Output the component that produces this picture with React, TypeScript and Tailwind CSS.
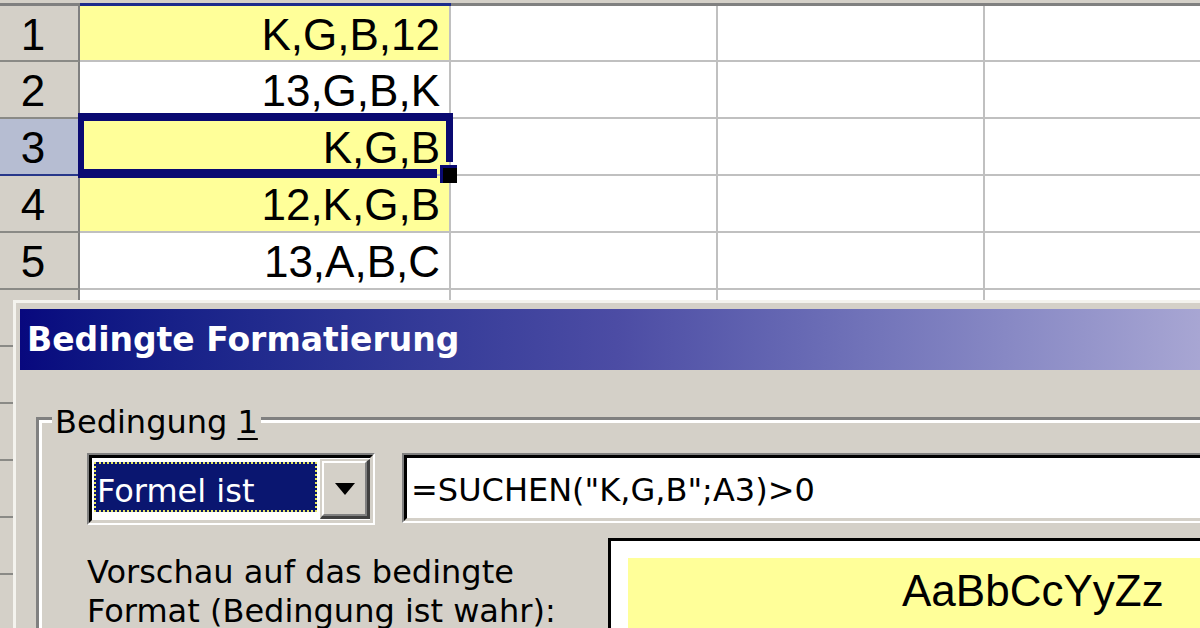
import React from "react";

type Row = { n: number; v?: string; y?: boolean };

const rows: Row[] = [
  { n: 1, v: "K,G,B,12", y: true },
  { n: 2, v: "13,G,B,K" },
  { n: 3, v: "K,G,B", y: true },
  { n: 4, v: "12,K,G,B", y: true },
  { n: 5, v: "13,A,B,C" },
  { n: 6 },
  { n: 7 },
  { n: 8 },
  { n: 9 },
  { n: 10 },
  { n: 11 },
];

function SheetRow({ r, first }: { r: Row; first: boolean }) {
  const sel = r.n === 3;
  return (
    <div className={`flex shrink-0 ${first ? "h-[56px]" : "h-[57px]"}`}>
      <div
        className={`w-[80px] shrink-0 flex justify-center pr-[12px] pt-[1px] border-r-[2px] border-r-[#808080] border-b-[2px] leading-[55px] ${
          sel ? "bg-[#b6bdd2] border-b-[#27378a]" : "bg-[#d4d0c8] border-b-[#8a8a86]"
        }`}
      >
        {r.n <= 5 ? r.n : ""}
      </div>
      <div
        className={`w-[371px] shrink-0 text-right pr-[9px] pt-[1px] leading-[55px] border-r-[2px] border-b-[2px] border-[#c0c0c0] ${
          r.y ? "bg-[#ffff99]" : "bg-white"
        }`}
      >
        {r.v ?? ""}
      </div>
      <div className="w-[267px] shrink-0 bg-white border-r-[2px] border-b-[2px] border-[#c0c0c0]" />
      <div className="w-[267px] shrink-0 bg-white border-r-[2px] border-b-[2px] border-[#c0c0c0]" />
      <div className="flex-1 bg-white border-b-[2px] border-[#c0c0c0]" />
    </div>
  );
}

export default function App() {
  return (
    <div className="relative w-[1200px] h-[628px] overflow-hidden bg-white font-['Liberation_Sans',Arial,sans-serif] text-[44px] text-black">
      {/* Spreadsheet */}
      <div className="flex flex-col">
        <div className="flex h-[6px] shrink-0">
          <div className="w-[80px] shrink-0 bg-[#d4d0c8] border-b-[3px] border-[#808080]" />
          <div className="w-[371px] shrink-0 bg-[#d4d0c8] border-b-[3px] border-[#1c2c8c]" />
          <div className="flex-1 bg-[#d4d0c8] border-b-[3px] border-[#808080]" />
        </div>
        {rows.map((r, i) => (
          <SheetRow key={r.n} r={r} first={i === 0} />
        ))}
      </div>

      {/* Selection border around A3 */}
      <div className="absolute left-[78px] top-[113px] w-[375px] h-[8px] bg-[#0a0a72]" />
      <div className="absolute left-[78px] top-[113px] w-[6px] h-[65px] bg-[#0a0a72]" />
      <div className="absolute left-[446px] top-[113px] w-[7px] h-[49px] bg-[#0a0a72]" />
      <div className="absolute left-[78px] top-[169px] w-[359px] h-[9px] bg-[#0a0a72]" />
      <div className="absolute left-[440px] top-[165px] w-[17px] h-[18px] bg-black border-l-[3px] border-t-[3px] border-[#0a0a72]" />

      {/* Dialog */}
      <div className="absolute left-[13px] top-[300px] w-[1200px] h-[340px] bg-[#d4d0c8] border-t-[3px] border-l-[3px] border-[#f4f3ee] pt-[6px] pl-[4px] font-['DejaVu_Sans',sans-serif] text-[32px]">
        <div className="h-[61px] bg-linear-to-r from-[#08087e] via-[#4c4ca4] via-50% to-[#aaa8d4] flex items-center pl-[7px]">
          <span className="font-['DejaVu_Sans',sans-serif] font-bold text-[33px] text-white">
            Bedingte Formatierung
          </span>
        </div>
        <div className="pt-[47px] pl-[16px]">
          <div className="relative border-t-[3px] border-l-[3px] border-[#808080]">
            <div className="absolute left-[13px] top-[-16px] px-[3px] bg-[#d4d0c8] leading-[37px]">
              Bedingung <span className="underline decoration-[2px] underline-offset-[5px]">1</span>
            </div>
            <div className="border-t-[3px] border-l-[3px] border-white pt-[30px] pl-[45px] h-[300px]">
              {/* Row: combo + formula */}
              <div className="flex items-start gap-[27px]">
                <div className="w-[288px] h-[72px] shrink-0 border-[2px] border-t-[#808080] border-l-[#808080] border-b-white border-r-white">
                  <div className="h-full border-[3px] border-t-black border-l-black border-b-[#d4d0c8] border-r-[#d4d0c8] bg-white flex items-stretch">
                    <div className="ml-[2px] mt-[4px] w-[223px] h-[50px] bg-[#0a1670] border-[2px] border-dotted border-[#e8e860] text-white pl-[1px] pt-[9px] leading-[37px] overflow-hidden whitespace-nowrap">
                      Formel ist
                    </div>
                    <div className="flex-1" />
                    <div className="w-[50px] my-[1px] border-t-[2px] border-l-[2px] border-t-[#d4d0c8] border-l-[#d4d0c8] border-b-[3px] border-r-[3px] border-b-[#404040] border-r-[#404040]">
                      <div className="h-full bg-[#d4d0c8] border-t-[2px] border-l-[2px] border-t-white border-l-white border-b-[2px] border-r-[2px] border-b-[#808080] border-r-[#808080] flex items-center justify-center">
                        <svg width="20" height="12" viewBox="0 0 20 12">
                          <polygon points="0,0 20,0 10,12" fill="#000" />
                        </svg>
                      </div>
                    </div>
                  </div>
                </div>
                <div className="flex-1 h-[70px] border-[2px] border-t-[#808080] border-l-[#808080] border-b-white border-r-white">
                  <div className="h-full border-[3px] border-t-black border-l-black border-b-[#d4d0c8] border-r-[#d4d0c8] bg-white pl-[4px] pt-[14px] leading-[37px] whitespace-nowrap">
                    =SUCHEN("K,G,B";A3)&gt;0
                  </div>
                </div>
              </div>
              {/* Row: preview */}
              <div className="flex items-start mt-[13px]">
                <div className="w-[521px] shrink-0 mt-[15px] leading-[39px]">
                  Vorschau auf das bedingte
                  <br />
                  Format (Bedingung ist wahr):
                </div>
                <div className="flex-1 h-[200px] border-t-[3px] border-l-[3px] border-black bg-white pt-[17px] pl-[17px]">
                  <div className="h-full bg-[#ffff99] pt-[11px] pl-[274px] font-['Liberation_Sans',Arial,sans-serif] text-[44px] leading-none whitespace-nowrap">
                    AaBbCcYyZz
                  </div>
                </div>
              </div>
            </div>
          </div>
        </div>
      </div>
    </div>
  );
}
